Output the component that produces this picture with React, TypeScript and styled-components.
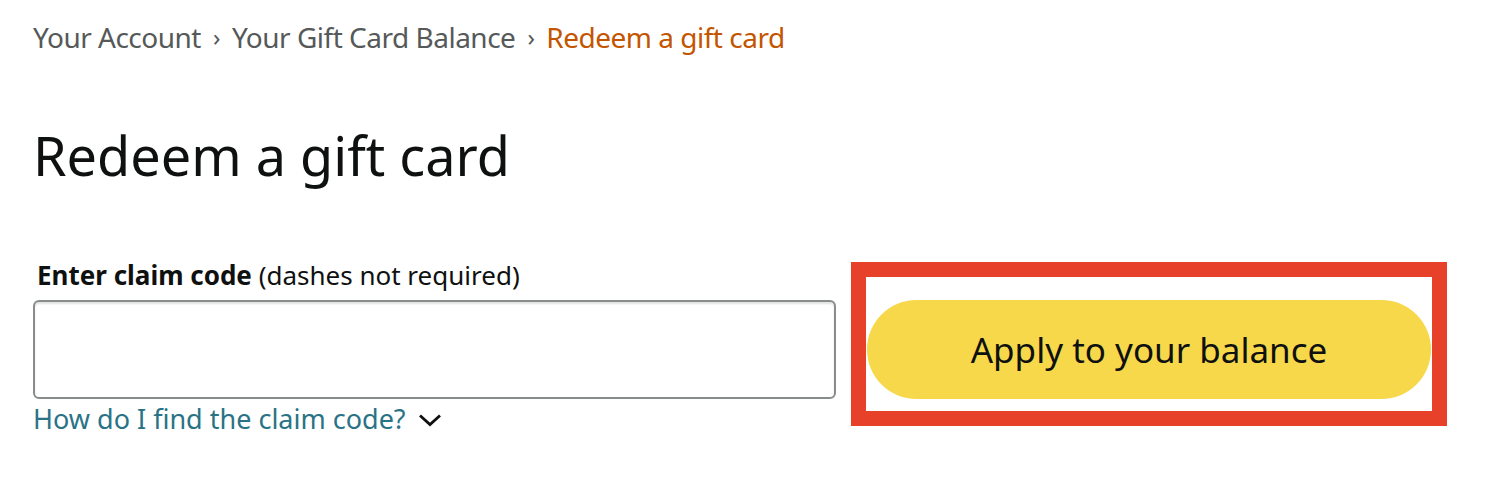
import styled, { createGlobalStyle } from 'styled-components';

const Global = createGlobalStyle`
  body {
    margin: 0;
    background: #fff;
    font-family: "Noto Sans", "Open Sans", sans-serif;
    color: #0f1111;
  }
`;

const App = () => (
  <>
    <Global />
    <Page>
      <Crumbs>
        <Crumb>Your Account</Crumb>
        <Sep>›</Sep>
        <Crumb>Your Gift Card Balance</Crumb>
        <Sep>›</Sep>
        <Crumb current>Redeem a gift card</Crumb>
      </Crumbs>
      <Title>Redeem a gift card</Title>
      <FormRow>
        <Field>
          <Label>
            <b>Enter claim code</b> (dashes not required)
          </Label>
          <CodeInput type="text" />
          <Help>
            How do I find the claim code?
            <svg width="24" height="14" viewBox="0 0 24 14">
              <path d="M2 2.5 L12 11.5 L22 2.5" fill="none" stroke="#0f1111" strokeWidth="2.8" />
            </svg>
          </Help>
        </Field>
        <Highlight>
          <ApplyButton>Apply to your balance</ApplyButton>
        </Highlight>
      </FormRow>
    </Page>
  </>
);

const Page = styled.main`
  padding: 20px 0 0 33px;
`;

const Crumbs = styled.nav`
  display: flex;
  align-items: center;
  gap: 12px;
  font-size: 28px;
  line-height: 34px;
  letter-spacing: -0.5px;
`;

const Crumb = styled.span<{ current?: boolean }>`
  color: ${p => (p.current ? '#c45500' : '#565959')};
`;

const Sep = styled.span`
  color: #565959;
  font-size: 24px;
`;

const Title = styled.h1`
  margin: 69px 0 0;
  font-size: 54px;
  font-weight: 400;
  line-height: 64px;
  color: #0f1111;
`;

const FormRow = styled.div`
  display: flex;
  align-items: flex-start;
  margin-top: 75px;
`;

const Field = styled.div`
  width: 803px;
  display: flex;
  flex-direction: column;
`;

const Label = styled.label`
  padding-left: 4px;
  font-size: 26px;
  line-height: 26px;
  margin: 0 0 12px;
  b {
    font-weight: 700;
  }
`;

const CodeInput = styled.input`
  box-sizing: border-box;
  height: 99px;
  width: 100%;
  border: 2px solid #888c8c;
  border-radius: 6px;
  box-shadow: inset 0 2px 2px rgba(15, 17, 17, 0.12);
  outline: none;
  font-size: 24px;
  padding: 0 14px;
`;

const Help = styled.a`
  display: flex;
  align-items: center;
  gap: 12px;
  margin-top: 4px;
  font-size: 27px;
  line-height: 32px;
  color: #2a7386;
  cursor: pointer;
  svg {
    margin-top: 2px;
  }
`;

const Highlight = styled.div`
  margin-left: 15px;
  width: 565px;
  border: 15px solid #e8412a;
  padding: 23px 0 12px 1px;
  background: #fff;
`;

const ApplyButton = styled.button`
  display: block;
  width: 564px;
  height: 99px;
  border: none;
  border-radius: 50px;
  background: #f7d84b;
  font-family: "Noto Sans", "Open Sans", sans-serif;
  font-size: 35px;
  color: #0f1111;
  cursor: pointer;
`;

export default App;
